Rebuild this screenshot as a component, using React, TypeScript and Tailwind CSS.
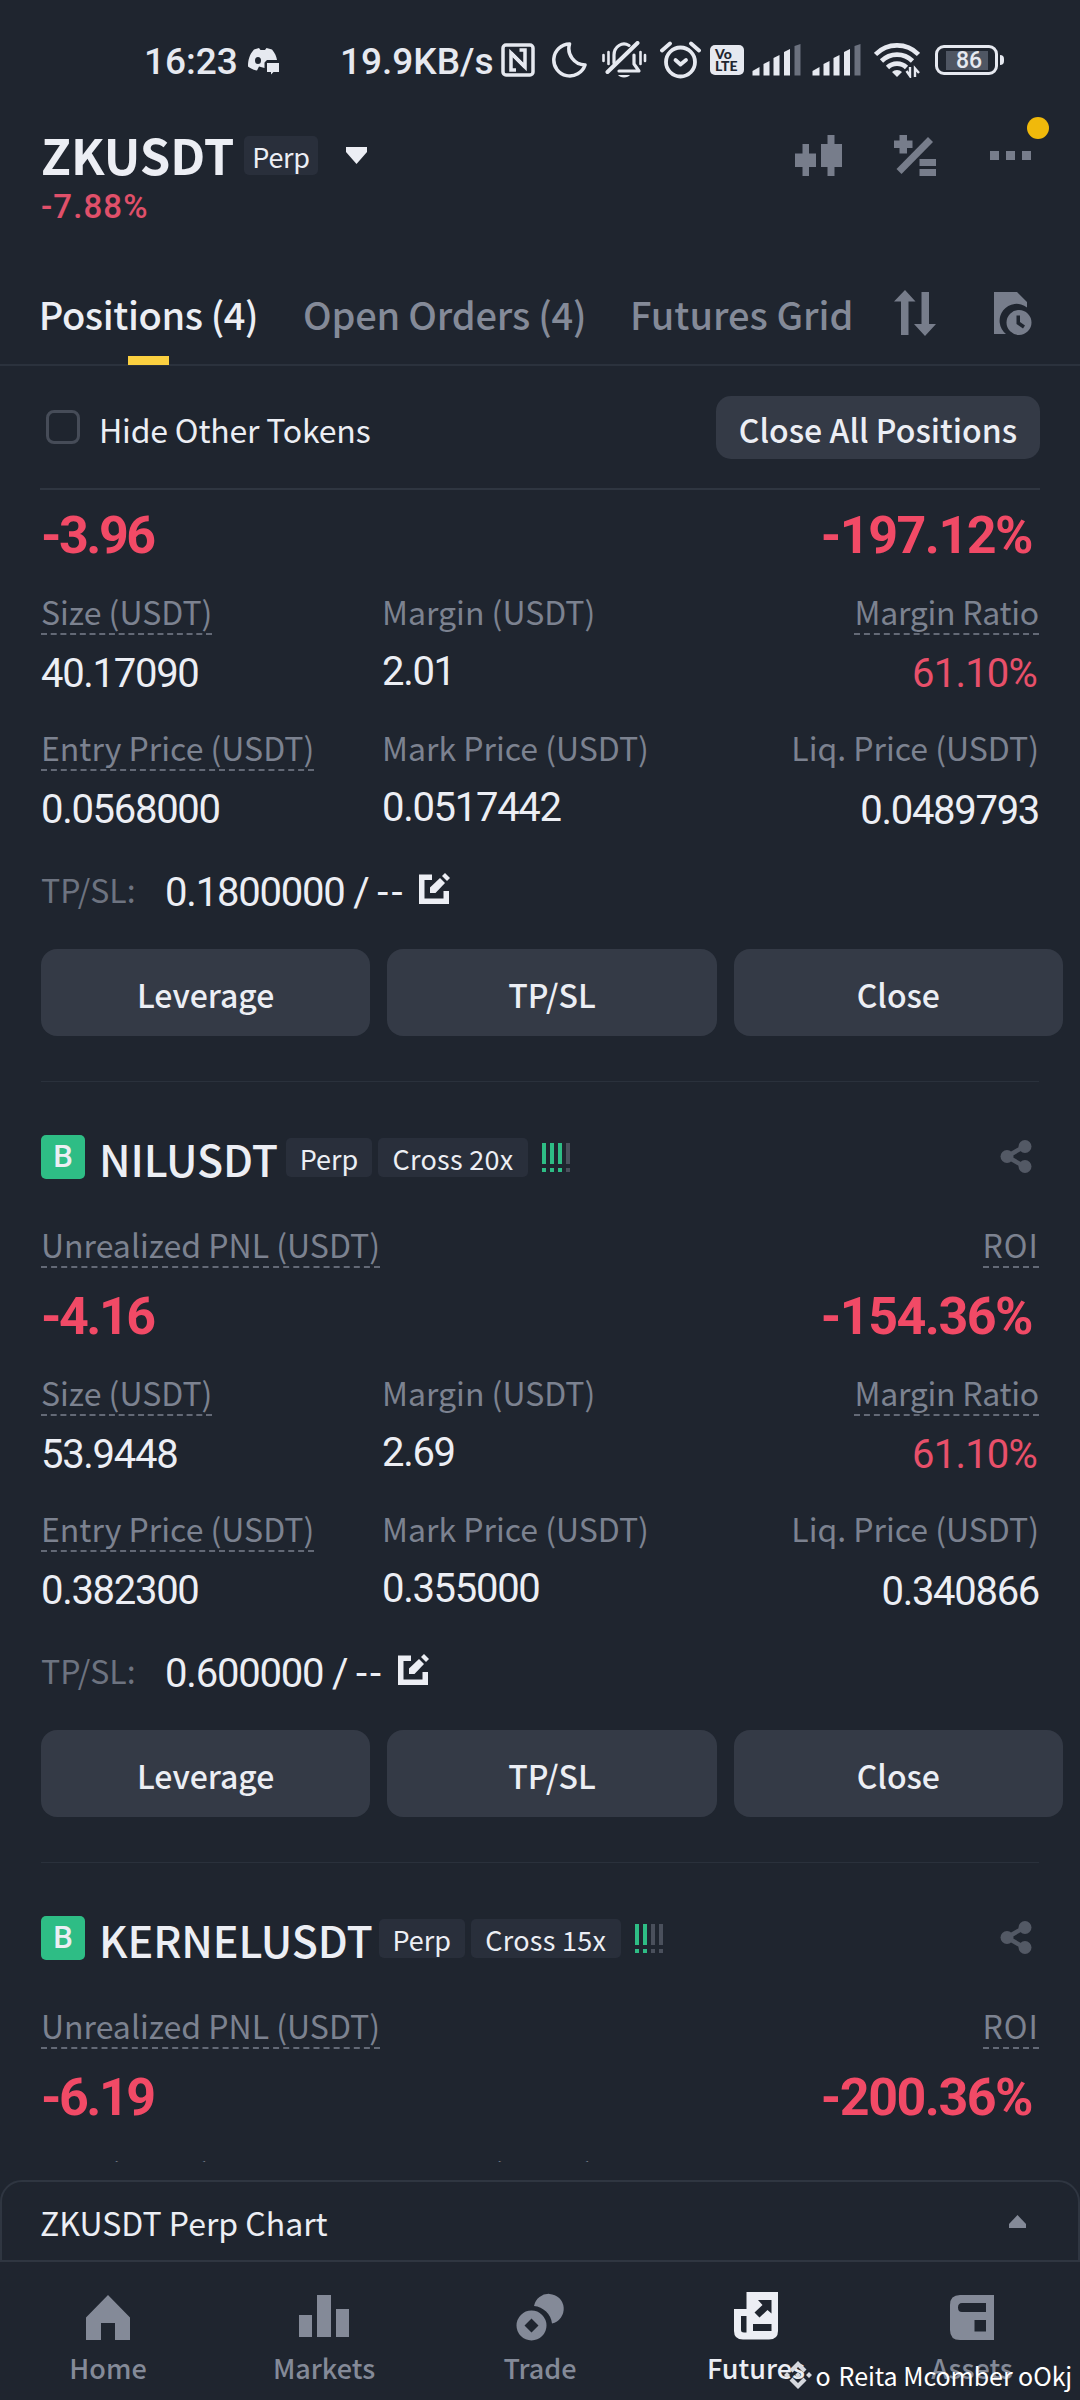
import React from 'react'
import clsx from 'clsx'

type Stat = {
  label: string
  value?: string
}

type Position = {
  symbol?: string
  leverage?: string
  risk?: number
  pnl: string
  roi: string
  stats: Stat[][]
  tpsl?: string
}

const positions: Position[] = [
  {
    pnl: '-3.96',
    roi: '-197.12%',
    stats: [
      [
        { label: 'Size (USDT)', value: '40.17090' },
        { label: 'Margin (USDT)', value: '2.01' },
        { label: 'Margin Ratio', value: '61.10%' }
      ],
      [
        { label: 'Entry Price (USDT)', value: '0.0568000' },
        { label: 'Mark Price (USDT)', value: '0.0517442' },
        { label: 'Liq. Price (USDT)', value: '0.0489793' }
      ]
    ],
    tpsl: '0.1800000 / --'
  },
  {
    symbol: 'NILUSDT',
    leverage: 'Cross 20x',
    risk: 3,
    pnl: '-4.16',
    roi: '-154.36%',
    stats: [
      [
        { label: 'Size (USDT)', value: '53.9448' },
        { label: 'Margin (USDT)', value: '2.69' },
        { label: 'Margin Ratio', value: '61.10%' }
      ],
      [
        { label: 'Entry Price (USDT)', value: '0.382300' },
        { label: 'Mark Price (USDT)', value: '0.355000' },
        { label: 'Liq. Price (USDT)', value: '0.340866' }
      ]
    ],
    tpsl: '0.600000 / --'
  },
  {
    symbol: 'KERNELUSDT',
    leverage: 'Cross 15x',
    risk: 2,
    pnl: '-6.19',
    roi: '-200.36%',
    stats: [[{ label: 'Size (USDT)' }, { label: 'Margin (USDT)' }]]
  }
]

const SignalIcon = () => (
  <svg className="h-[32px] w-[49px]" viewBox="0 0 49 32">
    <g fill="#e6e9f0">
      <path d="M0.500 31.500V27L7.500 23V31.500Z" />
      <path d="M11.500 31.500V20L17.500 17V31.500Z" />
      <path d="M21.500 31.500V14L27.500 11V31.500Z" />
      <path d="M32 31.500V8L38 5V31.500Z" />
    </g>
    <path d="M42.500 31.500V2L48.500 0V31.500Z" fill="#6b717e" />
  </svg>
)

const StatusBar = () => (
  <div className="flex h-[120px] shrink-0 items-center font-['Roboto',sans-serif] text-[37px] font-medium text-[#e6e9f0]">
    <span className="ml-[144px] w-[95px] whitespace-nowrap pt-[3px]">16:23</span>
    <svg className="mt-[2px] ml-[9px] h-[27px] w-[31px]" viewBox="0 0 31 27" fill="currentColor">
      <path
        fillRule="evenodd"
        d="M6 1.500L11 0L12.500 2H17L18.500 0L24 1.500C27 5 28.500 8.500 29 12H19L16.500 14.500V20L11 18.500L9 22.500C5.500 22 2.500 20.500 0 18.500C0 12 1.500 6.500 6 1.500ZM10 9A3 3.500 0 1 0 10 16A3 3.500 0 1 0 10 9Z"
      />
      <path d="M19 15H31V24H25.500L23 26.500V24H19Z" />
    </svg>
    <span className="ml-[61px] w-[159px] whitespace-nowrap pt-[3px]">19.9KB/s</span>
    <svg className="ml-[2px] h-[34px] w-[34px]" viewBox="0 0 34 34" fill="none" stroke="currentColor" strokeWidth="3.500">
      <rect x="2" y="2" width="30" height="30" rx="3" />
      <path d="M15 27H10V10L24 24" />
      <path d="M18.500 7H24V24L10 10" />
    </svg>
    <svg className="ml-[17px] h-[36px] w-[35px]" viewBox="0 0 35 36" fill="none" stroke="currentColor" strokeWidth="3.500" strokeLinejoin="round">
      <path d="M17.500 2A16 16 0 1 0 33 23A16.500 16.500 0 0 1 17.500 2Z" />
    </svg>
    <svg className="ml-[15px] h-[38px] w-[45px]" viewBox="0 0 45 38" fill="none" stroke="currentColor" strokeWidth="3.200" strokeLinecap="round">
      <path d="M12 22V14A10 11 0 0 1 27 4.500" />
      <path d="M32 14V23L37 30H17" strokeLinejoin="round" />
      <path d="M5.500 31L35.500 2" strokeWidth="4" />
      <path d="M1.500 14V20M6.500 11V23M38.500 11V23M43 14V20" strokeWidth="2.600" />
      <path d="M16 34H28A6.500 4 0 0 1 16 34Z" fill="currentColor" stroke="none" />
    </svg>
    <svg className="ml-[13px] h-[38px] w-[41px]" viewBox="0 0 41 38" fill="none" stroke="currentColor" strokeWidth="3.800" strokeLinecap="round">
      <circle cx="20.500" cy="21" r="14.500" />
      <path d="M2 9.500L10 2.500M39 9.500L31 2.500" />
      <path d="M15.500 19L20.500 23.500L26 19" strokeLinejoin="round" />
    </svg>
    <span className="ml-[9px] flex h-[30px] w-[34px] flex-col justify-center rounded-[5px] bg-[#e6e9f0] pl-[5px] font-['Lato',sans-serif] text-[14px] leading-[12px] font-black text-[#1f252f]">
      <span>Vo</span>
      <span>LTE</span>
    </span>
    <span className="ml-[8px]">
      <SignalIcon />
    </span>
    <span className="ml-[11px]">
      <SignalIcon />
    </span>
    <svg className="ml-[13px] h-[36px] w-[46px]" viewBox="0 0 46 36" fill="none" stroke="currentColor" strokeWidth="4.600">
      <path d="M1.500 12.500A30 30 0 0 1 44.500 12.500" />
      <path d="M7.500 19A22 22 0 0 1 38.500 19" />
      <path d="M13.500 25.500A13.500 13.500 0 0 1 32.500 25.500" />
      <path d="M18 30A7 7 0 0 1 28 30L23 35Z" fill="currentColor" stroke="none" />
      <path d="M32.500 29L36 34V25M45 31L41 26.500V35" strokeWidth="2.400" />
    </svg>
    <span className="ml-[15px] flex h-[30px] w-[63px] items-center justify-center rounded-[9px] border-[3px] border-[#e6e9f0]">
      <span className="flex h-[19px] w-[42px] items-center justify-center bg-[#4f5663] pl-[5px] text-[23px] leading-none">
        86
      </span>
    </span>
    <span className="ml-[2px] h-[10px] w-[4px] rounded-r bg-[#e6e9f0]" />
  </div>
)

const Header = () => (
  <div className="flex h-[135px] shrink-0 justify-between pr-[49px] pl-[41px]">
    <div className="flex flex-col">
      <div className="flex items-start pt-[8px]">
        <h1 className="h-[58px] w-[203px] pt-px text-[49px] leading-[50px] font-bold whitespace-nowrap">ZKUSDT</h1>
        <span className="mt-[8px] flex h-[39px] w-[74px] justify-center rounded-[5px] bg-[#292f3b] text-[27px] leading-[41px] tracking-[-0.3px]">
          Perp
        </span>
        <svg className="mt-[19px] ml-[28px] h-[17px] w-[21px]" viewBox="0 0 21 17" fill="#eceef4">
          <path d="M0 0H21V5L10.500 17L0 5Z" />
        </svg>
      </div>
      <span className="font-['Roboto',sans-serif] text-[33px] leading-[42px] font-medium tracking-[1.100px] text-[#e0506a]">
        -7.88%
      </span>
    </div>
    <div className="flex pt-[15px]">
      <svg className="h-[41px] w-[47px]" viewBox="0 0 47 41" fill="#777d8b">
        <path d="M7.500 9H14V18.500H21V32H14V41H7.500V32H0V18.500H7.500Z" />
        <path d="M32.500 0H39.500V9H47V32H39.500V41H32.500V32H26V9H32.500Z" />
      </svg>
      <svg className="ml-[52px] h-[41px] w-[42px]" viewBox="0 0 42 41" fill="#777d8b">
        <path d="M5.500 0H13V5.500H18.500V13H13V18.500H5.500V13H0V5.500H5.500Z" />
        <path d="M34 2L39 7L7.500 39L2.500 34Z" />
        <path d="M25.500 24H42V31H25.500ZM25.500 34H42V41H25.500Z" />
      </svg>
      <div className="relative ml-[54px] flex h-[41px] w-[41px] gap-[7px] pt-[16px]">
        <span className="size-[9px] bg-[#777d8b]" />
        <span className="size-[9px] bg-[#777d8b]" />
        <span className="size-[9px] bg-[#777d8b]" />
        <span className="absolute top-[-18px] left-[37px] size-[22px] rounded-full bg-[#f0b90b]" />
      </div>
    </div>
  </div>
)

const Tabs = () => (
  <div className="flex h-[111px] shrink-0 border-b-2 border-[#2b323d] pl-[40px] text-[38px] font-medium whitespace-nowrap text-[#848a98]">
    <div className="flex w-[217px] flex-col items-center">
      <span className="h-[101px] leading-[117px] tracking-[-0.400px] text-[#eceef4]">Positions (4)</span>
      <span className="h-[9px] w-[41px] shrink-0 bg-[#fbd040]" />
    </div>
    <span className="ml-[46px] w-[327px] leading-[117px] tracking-[-0.200px]">Open Orders (4)</span>
    <span className="w-[264px] leading-[117px]">Futures Grid</span>
    <svg className="mt-[35px] h-[46px] w-[42px]" viewBox="0 0 42 46" fill="#777d8b">
      <path d="M11 0L21.500 11.500H14.500V45H7V11.500H0Z" />
      <path d="M27.500 2H35V34H42L31 46L20 34H27.500Z" />
    </svg>
    <svg className="mt-[37px] ml-[58px] h-[43px] w-[38px]" viewBox="0 0 38 43" fill="#777d8b">
      <path d="M0 0H23L33 10V15.500A16 16 0 0 0 12 42H0Z" />
      <path
        fillRule="evenodd"
        d="M25 18A12.500 12.500 0 1 0 25 43A12.500 12.500 0 1 0 25 18ZM22.500 23.500H26V30L31 33.500L29 36.500L22.500 32Z"
      />
    </svg>
  </div>
)

const FilterRow = () => (
  <div className="mr-[40px] ml-[40px] flex h-[124px] shrink-0 items-center border-b-2 border-[#2f3641]">
    <span className="ml-[6px] size-[34px] rounded-[8px] border-[3px] border-[#464c58]" />
    <span className="ml-[19px] pt-[3px] text-[32px] leading-[44px] tracking-[-0.200px]">Hide Other Tokens</span>
    <button
      type="button"
      className="ml-auto h-[63px] w-[324px] rounded-[15px] bg-[#343a46] pt-[3px] text-[32px] font-medium tracking-[0.050px]"
    >
      Close All Positions
    </button>
  </div>
)

const RiskBars = ({ level }: { level: number }) => (
  <svg className="ml-[14px] h-[29px] w-[28px]" viewBox="0 0 28 29">
    {[0, 1, 2, 3].map((i) => (
      <g key={i} fill={i < level ? '#2ebd85' : '#4a505c'}>
        <rect x={i * 8} y="0" width="4" height="21" />
        <rect x={i * 8} y="25" width="4" height="4" />
      </g>
    ))}
  </svg>
)

const EditIcon = () => (
  <svg className="mb-[5px] ml-[14px] h-[31px] w-[31px]" viewBox="0 0 31 31" fill="#eceef4">
    <path d="M0 1.500H13V7H5.500V25.500H24.500V18H30V31H0Z" />
    <path d="M11 20V14.500L21 5L26 10L16.500 20Z" />
    <path d="M23 3L26 0L31 5L28 8Z" />
  </svg>
)

const StatCell = ({ label, value, column }: Stat & { column: number }) => (
  <div className={clsx('flex flex-col', column === 2 ? 'items-end' : 'items-start')}>
    <span
      className={clsx(
        'h-[44px] text-[32px] leading-[44px] whitespace-nowrap text-[#7c8290]',
        column !== 1 && label !== 'Liq. Price (USDT)' && 'box-content border-b-2 border-dashed border-[#636976]',
        label === 'Liq. Price (USDT)' && 'mb-[3px]',
        label === 'Margin Ratio' && 'tracking-[-0.250px]'
      )}
    >
      {label}
    </span>
    {value && (
      <span
        className={clsx(
          "font-['Roboto',sans-serif] text-[40px] leading-[77px]",
          value.includes('%')
            ? 'pr-[2px] tracking-[-0.800px] text-[#e8506a]'
            : 'tracking-[-1.300px] text-[#eceef4]'
        )}
      >
        {value}
      </span>
    )}
  </div>
)

const PositionCard = ({ position }: { position: Position }) => {
  const { symbol, leverage, risk, pnl, roi, stats, tpsl } = position
  return (
    <section className={clsx('shrink-0 pl-[41px]', symbol && 'h-[781px]')}>
      {symbol && (
        <>
          <div className="mr-[41px] h-px bg-[#2a313c]" />
          <div className="mr-[41px] flex h-[140px] items-center pt-[10px]">
            <span className="flex size-[44px] items-center justify-center rounded-[5px] bg-[#2ebd85] font-['Roboto',sans-serif] text-[31px] font-medium">
              B
            </span>
            <h2 className="ml-[14px] min-w-[181px] pt-px text-[43px] leading-[50px] font-medium tracking-[-0.100px]">
              {symbol}
            </h2>
            <span className="ml-[6px] h-[39px] w-[86px] rounded-[5px] bg-[#292f3b] text-center text-[27px] leading-[41px]">
              Perp
            </span>
            <span className="ml-[6px] h-[39px] w-[150px] rounded-[5px] bg-[#292f3b] text-center text-[27px] leading-[41px] tracking-[0.300px]">
              {leverage}
            </span>
            <RiskBars level={risk || 0} />
            <svg className="mr-[7px] mb-[2px] ml-auto h-[33px] w-[32px]" viewBox="0 0 32 33" fill="#535965">
              <path d="M25 6L7 16.500L25 27" fill="none" stroke="#535965" strokeWidth="4.500" />
              <circle cx="7" cy="16.500" r="6.500" />
              <circle cx="25" cy="6.500" r="6.500" />
              <circle cx="25" cy="26.500" r="6.500" />
            </svg>
          </div>
          <div className="mr-[41px] flex justify-between text-[32px] leading-[44px] text-[#7c8290]">
            <span className="border-b-2 border-dashed border-[#636976]">Unrealized PNL (USDT)</span>
            <span className="border-b-2 border-dashed border-[#636976] tracking-[1px]">ROI</span>
          </div>
        </>
      )}
      <div
        className={clsx(
          "mr-[48px] flex justify-between font-['Roboto',sans-serif] text-[52px] font-bold text-[#f14a66]",
          symbol ? 'mb-[4px] leading-[98px]' : 'mb-[7px] leading-[92px]'
        )}
      >
        <span className="tracking-[-2.500px]">{pnl}</span>
        <span className="tracking-[-1.500px]">{roi}</span>
      </div>
      {stats.map((row, i) => (
        <div key={i} className="mr-[41px] grid h-[136px] grid-cols-[341px_320px_1fr]">
          {row.map((stat, column) => (
            <StatCell key={stat.label} column={column} {...stat} />
          ))}
        </div>
      ))}
      {tpsl && (
        <>
          <div className="flex h-[59px] items-center">
            <span className="w-[124px] pb-[4px] text-[32px] leading-[44px] text-[#6d7380]">TP/SL:</span>
            <span className="pt-[4px] font-['Roboto',sans-serif] text-[40px] leading-[50px]">
              <span className="tracking-[-1.200px]">{tpsl.slice(0, -2)}</span>
              <span className="tracking-[3px]">--</span>
            </span>
            <EditIcon />
          </div>
          <div className="mt-[29px] mr-[17px] mb-[45px] flex gap-[17px]">
            {['Leverage', 'TP/SL', 'Close'].map((action) => (
              <button
                key={action}
                type="button"
                className="h-[87px] flex-1 rounded-[16px] bg-[#343a46] pt-[3px] text-[32px] font-medium"
              >
                {action}
              </button>
            ))}
          </div>
        </>
      )}
    </section>
  )
}

const navItems = [
  {
    label: 'Home',
    icon: <path d="M4 45V22.500L26 0L48 22.500V45H33V28H19V45Z" />
  },
  {
    label: 'Markets',
    icon: <path d="M1 20H14V42H1ZM19 0H33V42H19ZM38 14H51V42H38Z" />
  },
  {
    label: 'Trade',
    icon: (
      <>
        <path
          fillRule="evenodd"
          d="M17.500 15.500A15 15 0 1 0 17.500 45.500A15 15 0 1 0 17.500 15.500ZM17.500 23.500L24.500 30.500L17.500 37.500L10.500 30.500Z"
        />
        <path d="M20 11A15 15 0 1 1 38 28.500A20 20 0 0 0 20 11Z" />
      </>
    )
  },
  {
    label: 'Futures',
    active: true,
    icon: (
      <path
        fillRule="evenodd"
        d="M16.500 -3H48V36Q48 44.500 39 44.500H13Q4 44.500 4 36V14H16.500ZM11 21V35Q11 37.500 14 37.500H16.500V21ZM23 29H41.500V36H23ZM28 5H41.500V18.500L37.500 15L29.500 22.500L24.500 17.500L32.500 10Z"
      />
    )
  },
  {
    label: 'Assets',
    icon: (
      <path
        fillRule="evenodd"
        d="M14 0H48V45H14Q4 45 4 35V10Q4 0 14 0ZM16 8Q12 8 12 12.500Q12 17 16 17H40V8ZM28.500 25H40V36.500H28.500Z"
      />
    )
  }
]

const BottomNav = () => (
  <nav className="relative flex h-[138px] shrink-0">
    {navItems.map(({ label, icon, active }) => (
      <div
        key={label}
        className={clsx('flex flex-1 flex-col items-center pt-[33px]', active ? 'text-[#eceef4]' : 'text-[#848a98]')}
      >
        <svg className="h-[46px] w-[52px] overflow-visible" viewBox="0 0 52 46" fill="currentColor">
          {icon}
        </svg>
        <span className="mt-[7px] text-[27px] leading-[40px] font-medium">{label}</span>
      </div>
    ))}
    <div className="absolute right-[8px] bottom-[1px] flex h-[48px] items-center text-[25px] leading-[40px] whitespace-nowrap text-white">
      <svg className="h-[28px] w-[28px]" viewBox="0 0 28 28" fill="#d5d8de">
        <path d="M14 0L22.500 8.500L19.500 11.500L14 6L8.500 11.500L5.500 8.500Z" />
        <path d="M14 28L22.500 19.500L19.500 16.500L14 22L8.500 16.500L5.500 19.500Z" />
        <path d="M14 11L17 14L14 17L11 14ZM3 11L6 14L3 17L0 14ZM25 11L28 14L25 17L22 14Z" />
      </svg>
      <span className="ml-[3px]">o</span>
      <span className="ml-[8px] tracking-[-0.050px]">Reita Mcomber oOkj</span>
    </div>
  </nav>
)

const App = () => {
  return (
    <div className="flex h-[2400px] w-[1080px] flex-col overflow-hidden bg-[#1f252f] font-['Noto_Sans_CJK_SC',sans-serif] text-[#eceef4]">
      <StatusBar />
      <Header />
      <Tabs />
      <FilterRow />
      <main className="flex h-[1672px] shrink-0 flex-col overflow-hidden">
        {positions.map((position) => (
          <PositionCard key={position.pnl} position={position} />
        ))}
      </main>
      <div className="mt-[18px] flex h-[82px] shrink-0 items-center justify-between rounded-t-[22px] border-2 border-[#2f3641] pr-[52px] pl-[38px] text-[32px]">
        <span className="pt-px">ZKUSDT Perp Chart</span>
        <svg className="h-[13px] w-[17px]" viewBox="0 0 17 13" fill="#848a98">
          <path d="M8.500 0L17 9V13H0V9Z" />
        </svg>
      </div>
      <BottomNav />
    </div>
  )
}

export default App
